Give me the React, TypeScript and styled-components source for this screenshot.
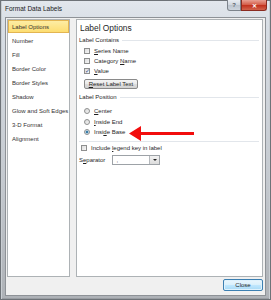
import React from "react";
import styled, { createGlobalStyle } from "styled-components";

const Global = createGlobalStyle`
  html, body { margin: 0; padding: 0; background: #ffffff; }
  body { font-family: "Liberation Sans", Arial, sans-serif; }
  * { box-sizing: border-box; }
`;

const Window = styled.div`
  width: 271px;
  height: 300px;
  display: flex;
  flex-direction: column;
  border: 1px solid #6e7378;
  background: linear-gradient(180deg, #e2e7ed 0%, #d8dee5 8%, #c4c9cf 60%, #aeb2b7 100%);
  padding: 0 4px 4px 4px;
  box-shadow: inset 1px 0 0 #c9ced3, inset -1px 0 0 #c9ced3, inset 0 -1px 0 #9a9ea3;
`;

const TitleBar = styled.div`
  height: 17px;
  display: flex;
  align-items: flex-start;
`;

const Title = styled.div`
  font-size: 6.5px;
  color: #1a1a1a;
  line-height: 16px;
  flex: 1;
`;

const Caption = styled.div`
  display: flex;
  margin-right: -1px;
  margin-top: -1px;
`;

const CapButton = styled.div<{ $close?: boolean }>`
  width: ${(p) => (p.$close ? 26 : 14)}px;
  height: 11px;
  display: flex;
  align-items: center;
  justify-content: center;
  border: 1px solid ${(p) => (p.$close ? "#8a2b20" : "#7d848c")};
  border-top: none;
  border-radius: ${(p) => (p.$close ? "0 0 3px 0" : "0 0 0 3px")};
  background: ${(p) =>
    p.$close
      ? "linear-gradient(180deg, #e8a093 0%, #d5604c 45%, #c2331f 55%, #d2634c 100%)"
      : "linear-gradient(180deg, #e9edf2 0%, #cfd6de 50%, #bcc5cf 55%, #cfd6de 100%)"};
  color: ${(p) => (p.$close ? "#ffffff" : "#5a6068")};
  font-size: 6px;
  font-weight: bold;
`;

const Content = styled.div`
  flex: 1;
  display: flex;
  flex-direction: column;
  background: #f0f0f0;
  border: 1px solid #8e9297;
`;

const Body = styled.div`
  display: flex;
  gap: 6px;
  padding: 1px 2px 0 1px;
  height: 259px;
`;

const List = styled.div`
  width: 63px;
  height: 258px;
  background: #ffffff;
  border: 1px solid #adb2b5;
  display: flex;
  flex-direction: column;
`;

const Item = styled.div<{ $selected?: boolean }>`
  height: 13px;
  margin-bottom: 1px;
  display: flex;
  align-items: center;
  padding-left: ${(p) => (p.$selected ? 3 : 4)}px;
  font-size: 6px;
  color: #333333;
  border: ${(p) => (p.$selected ? "1px solid #e3b552" : "none")};
  background: ${(p) =>
    p.$selected ? "linear-gradient(180deg, #fdeda4 0%, #fddd71 100%)" : "transparent"};
`;

const Panel = styled.div`
  position: relative;
  flex: 1;
  height: 258px;
  background: #ffffff;
  border: 1px solid #adb2b5;
  padding: 0 3px 0 2px;
  display: flex;
  flex-direction: column;
`;

const Heading = styled.div`
  font-size: 8.4px;
  line-height: 10px;
  margin-top: 3px;
  margin-left: 1px;
  color: #1f1f1f;
`;

const SectionHead = styled.div<{ $mt: number }>`
  display: flex;
  align-items: center;
  gap: 3px;
  height: 8px;
  margin-top: ${(p) => p.$mt}px;
  font-size: 6px;
  color: #1f1f1f;
  &::after {
    content: "";
    flex: 1;
    height: 1px;
    background: #e2e6eb;
  }
`;

const Rule = styled.div<{ $mt: number }>`
  height: 1px;
  background: #e2e6eb;
  margin-top: ${(p) => p.$mt}px;
`;

const Row = styled.div<{ $indent: number; $h?: number; $mt?: number; $gap?: number }>`
  display: flex;
  align-items: center;
  gap: ${(p) => p.$gap ?? 4}px;
  height: ${(p) => p.$h ?? 10}px;
  margin-top: ${(p) => p.$mt ?? 0}px;
  padding-left: ${(p) => p.$indent}px;
  font-size: 6px;
  color: #1f1f1f;
`;

const Check = styled.span`
  width: 6px;
  height: 6px;
  border: 1px solid #8e8f8f;
  background: linear-gradient(135deg, #dcdcdc 0%, #f6f6f6 100%);
  display: inline-flex;
  align-items: center;
  justify-content: center;
  font-size: 6px;
  line-height: 1;
  color: #3b4f88;
  flex: none;
`;

const Radio = styled.span<{ $on?: boolean }>`
  width: 6px;
  height: 6px;
  border-radius: 50%;
  border: 1px solid #8e8f8f;
  background: ${(p) =>
    p.$on
      ? "radial-gradient(circle, #2f6f97 0%, #3f86b4 45%, #e6eef4 60%)"
      : "linear-gradient(135deg, #d8d8d8 0%, #f6f6f6 100%)"};
  flex: none;
`;

const U = styled.span`
  text-decoration: underline;
`;

const ResetButton = styled.div`
  width: 54px;
  height: 10px;
  margin-top: 3px;
  margin-left: 5px;
  border: 1px solid #8a8a8a;
  border-radius: 2px;
  background: linear-gradient(180deg, #f4f4f4 0%, #eaeaea 50%, #dcdcdc 55%, #d2d2d2 100%);
  font-size: 6px;
  color: #1f1f1f;
  display: flex;
  align-items: center;
  justify-content: center;
`;

const Dropdown = styled.div`
  width: 48px;
  height: 10px;
  margin-left: 7px;
  border: 1px solid #9da2a7;
  background: #ffffff;
  display: flex;
  align-items: center;
  font-size: 6px;
`;

const DropText = styled.span`
  flex: 1;
  padding-left: 3px;
  line-height: 8px;
`;

const DropArrow = styled.span`
  width: 10px;
  height: 8px;
  border-left: 1px solid #b5b9bd;
  background: linear-gradient(180deg, #f2f2f2 0%, #dcdcdc 100%);
  display: flex;
  align-items: center;
  justify-content: center;
  &::before {
    content: "";
    border-left: 2px solid transparent;
    border-right: 2px solid transparent;
    border-top: 2px solid #222;
  }
`;

const Arrow = styled.svg`
  position: absolute;
  left: 51px;
  top: 105px;
`;

const Footer = styled.div`
  height: 18px;
  display: flex;
  justify-content: flex-end;
  padding: 2px 2px 0 0;
`;

const CloseButton = styled.div`
  width: 40px;
  height: 12px;
  border: 1px solid #3c7fb1;
  border-radius: 2px;
  background: linear-gradient(180deg, #eaf6fd 0%, #d9f0fc 50%, #bee6fd 55%, #a7d9f5 100%);
  box-shadow: inset 0 0 0 1px #dff2fd;
  font-size: 6px;
  color: #1f1f1f;
  display: flex;
  align-items: center;
  justify-content: center;
`;

const items = [
  "Label Options",
  "Number",
  "Fill",
  "Border Color",
  "Border Styles",
  "Shadow",
  "Glow and Soft Edges",
  "3-D Format",
  "Alignment",
];

export default function App() {
  return (
    <>
      <Global />
      <Window>
        <TitleBar>
          <Title>Format Data Labels</Title>
          <Caption>
            <CapButton>?</CapButton>
            <CapButton $close>✕</CapButton>
          </Caption>
        </TitleBar>
        <Content>
          <Body>
            <List>
              {items.map((t, i) => (
                <Item key={t} $selected={i === 0}>
                  {t}
                </Item>
              ))}
            </List>
            <Panel>
              <Heading>Label Options</Heading>
              <SectionHead $mt={3}>Label Contains</SectionHead>
              <Row $indent={5} $mt={2}>
                <Check />
                <span>
                  <U>S</U>eries Name
                </span>
              </Row>
              <Row $indent={5}>
                <Check />
                <span>
                  Category <U>N</U>ame
                </span>
              </Row>
              <Row $indent={5}>
                <Check>✓</Check>
                <span>
                  <U>V</U>alue
                </span>
              </Row>
              <ResetButton>
                <span>
                  <U>R</U>eset Label Text
                </span>
              </ResetButton>
              <SectionHead $mt={4}>Label Position</SectionHead>
              <Row $indent={5} $h={10.5} $mt={5}>
                <Radio />
                <span>
                  <U>C</U>enter
                </span>
              </Row>
              <Row $indent={5} $h={10.5}>
                <Radio />
                <span>
                  <U>I</U>nside End
                </span>
              </Row>
              <Row $indent={5} $h={10.5}>
                <Radio $on />
                <span>
                  Insi<U>d</U>e Base
                </span>
              </Row>
              <Rule $mt={3} />
              <Row $indent={2} $mt={1}>
                <Check />
                <span>
                  Include <U>l</U>egend key in label
                </span>
              </Row>
              <Row $indent={0} $mt={2} $gap={0}>
                <span>
                  S<U>e</U>parator
                </span>
                <Dropdown>
                  <DropText>,</DropText>
                  <DropArrow />
                </Dropdown>
              </Row>
              <Arrow width="68" height="17" viewBox="0 0 68 17">
                <polygon points="1,8.5 13,1 13,7 66,7 66,10 13,10 13,16" fill="#f20d0d" />
              </Arrow>
            </Panel>
          </Body>
          <Footer>
            <CloseButton>Close</CloseButton>
          </Footer>
        </Content>
      </Window>
    </>
  );
}
